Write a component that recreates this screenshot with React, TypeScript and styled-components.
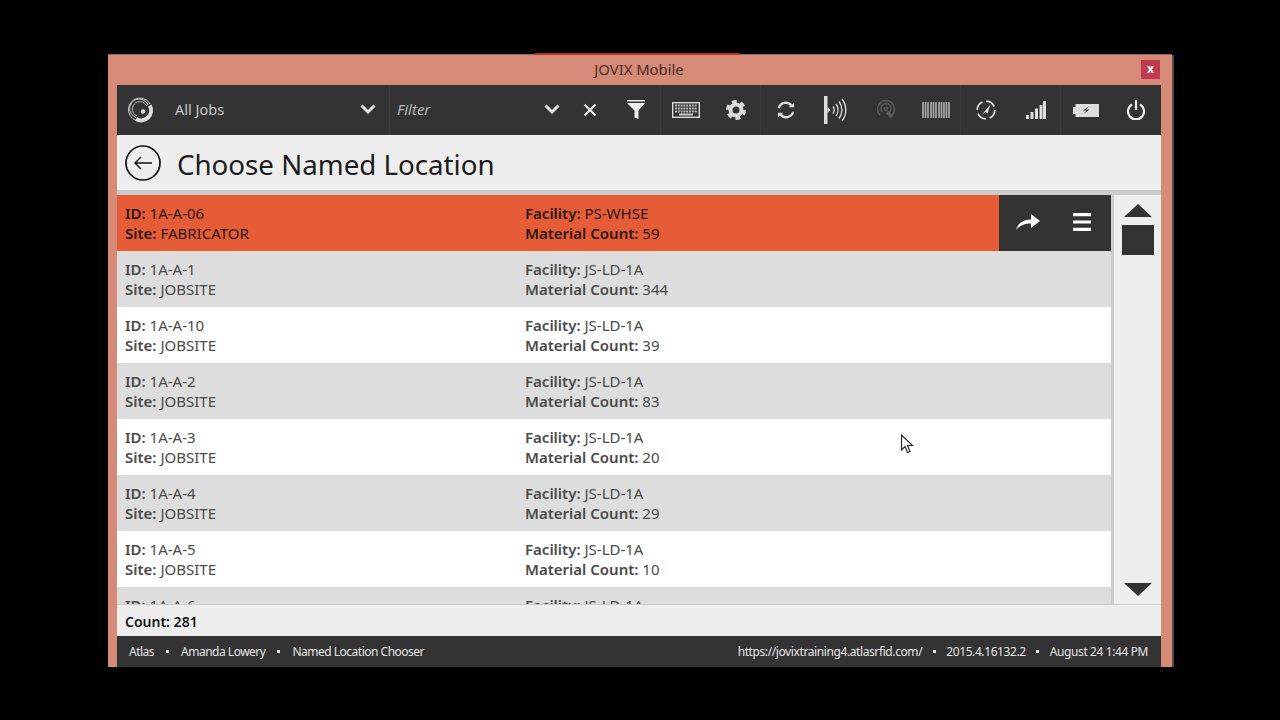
import React from 'react';
import styled, { createGlobalStyle } from 'styled-components';

const Global = createGlobalStyle`
  html, body {
    margin: 0;
    padding: 0;
    width: 1280px;
    height: 720px;
    overflow: hidden;
    background: #000;
    font-family: "Noto Sans", "Open Sans", "Liberation Sans", sans-serif;
  }
  * { box-sizing: border-box; }
`;

const Desk = styled.div`
  position: relative;
  width: 1280px;
  height: 720px;
  padding: 54px 0 0 108px;
`;

const Win = styled.div`
  position: relative;
  width: 1064px;
  height: 613px;
  background: #d58b77;
  border-top: 1px solid #8a6a60;
  padding: 0 11px 1px 9px;
  display: flex;
  flex-direction: column;
`;

const TopGlow = styled.div`
  position: absolute;
  top: -2px;
  left: 427px;
  width: 205px;
  height: 2px;
  background: #b5331a;
`;

const EdgeLine = styled.div`
  position: absolute;
  top: 0;
  right: -2px;
  width: 2px;
  height: 100%;
  background: #54474a;
`;

const TitleBar = styled.div`
  height: 30px;
  flex: none;
  display: flex;
  align-items: center;
  justify-content: center;
  font-size: 14.8px;
  color: #4a2a22;
  padding-bottom: 2px;
`;

const CloseBtn = styled.div`
  position: absolute;
  top: 5px;
  right: 12px;
  width: 19px;
  height: 19px;
  background: #c0394c;
  color: #fff;
  font-size: 12px;
  font-weight: 700;
  line-height: 17px;
  text-align: center;
`;

const Toolbar = styled.div`
  height: 50px;
  flex: none;
  background: #333;
  display: flex;
  align-items: stretch;
`;

const LogoCell = styled.div`
  width: 48px;
  display: flex;
  align-items: center;
  justify-content: center;
`;

const JobSelect = styled.div`
  width: 225px;
  padding: 0 13px 2px 10px;
  display: flex;
  align-items: center;
  justify-content: space-between;
  border-right: 1px solid #3a3a3a;
  color: #c8c8c8;
  font-size: 14.5px;
`;

const FilterBox = styled.div`
  width: 175px;
  padding: 0 5px 3px 7px;
  display: flex;
  align-items: center;
  justify-content: space-between;
  color: #b8b8b8;
  font-size: 15px;
  font-style: italic;
`;

const ClearCell = styled.div`
  width: 46px;
  padding-left: 4px;
  display: flex;
  align-items: center;
  justify-content: center;
`;

const ToolBtn = styled.div<{ $divider?: boolean }>`
  width: 50px;
  display: flex;
  align-items: center;
  justify-content: center;
  border-right: 1px solid ${p => (p.$divider ? '#3a3a3a' : 'transparent')};
`;

const Header = styled.div`
  height: 55px;
  flex: none;
  background: #eee;
  display: flex;
  align-items: center;
  gap: 16px;
  padding: 0 0 0 8px;
`;

const BackBtn = styled.div`
  width: 36px;
  height: 36px;
  display: flex;
`;

const Title = styled.h1`
  margin: 2px 0 0;
  font-size: 27.7px;
  font-weight: 400;
  color: #1c1c1c;
  line-height: 36px;
`;

const Main = styled.div`
  height: 415px;
  flex: none;
  display: flex;
  background: #eee;
  border-top: 5px solid #ccc;
  border-bottom: 1px solid #ccc;
`;

const List = styled.div`
  width: 994px;
  flex: none;
  overflow: hidden;
`;

const Row = styled.div<{ $tone: 'sel' | 'grey' | 'white' }>`
  height: 56px;
  display: flex;
  font-size: 15px;
  line-height: 20px;
  background: ${p => (p.$tone === 'sel' ? '#e55c37' : p.$tone === 'grey' ? '#dcdddc' : '#fff')};
  color: ${p => (p.$tone === 'sel' ? '#2c1810' : '#4a4a4a')};
`;

const Col = styled.div<{ $wide?: boolean }>`
  width: 400px;
  padding: 8px 0 0 8px;
  flex: ${p => (p.$wide ? '1' : 'none')};
  white-space: nowrap;
`;

const Label = styled.b`
  font-weight: 600;
`;

const Actions = styled.div`
  width: 112px;
  flex: none;
  background: #333;
  display: flex;
  align-items: center;
  justify-content: space-around;
  padding: 0 4px 3px 0;
`;

const Scroll = styled.div`
  flex: 1;
  border-left: 3px solid #ccc;
  padding: 9px 0 8px;
  display: flex;
  flex-direction: column;
  align-items: center;
`;

const Arrow = styled.div<{ $down?: boolean }>`
  width: 0;
  height: 0;
  border-left: 14px solid transparent;
  border-right: 14px solid transparent;
  border-${p => (p.$down ? 'top' : 'bottom')}: 13px solid #333;
  ${p => (p.$down ? 'margin-top: auto;' : '')}
`;

const Thumb = styled.div`
  width: 32px;
  height: 30px;
  margin-top: 8px;
  background: #333;
`;

const CountBar = styled.div`
  height: 31px;
  flex: none;
  background: #eee;
  padding: 1px 8px 0;
  display: flex;
  align-items: center;
  font-size: 14px;
  font-weight: 600;
  color: #111;
`;

const StatusBar = styled.div`
  height: 31px;
  flex: none;
  background: #333;
  color: #e6e6e6;
  font-size: 12px;
  display: flex;
  align-items: center;
  justify-content: space-between;
  padding: 0 13px 0 12px;
`;

const StatusGroup = styled.div<{ $tight?: boolean }>`
  display: flex;
  align-items: center;
  letter-spacing: ${p => (p.$tight ? '-0.5px' : '-0.4px')};
`;

const Dot = styled.i<{ $narrow?: boolean }>`
  width: 3px;
  height: 3px;
  margin: 0 ${p => (p.$narrow ? '10.500px' : '12px')};
  background: #e6e6e6;
`;

const Pointer = styled.svg`
  position: absolute;
  left: 900px;
  top: 434px;
`;

const rows = [
  ['1A-A-1', 'JOBSITE', 'JS-LD-1A', '344'],
  ['1A-A-10', 'JOBSITE', 'JS-LD-1A', '39'],
  ['1A-A-2', 'JOBSITE', 'JS-LD-1A', '83'],
  ['1A-A-3', 'JOBSITE', 'JS-LD-1A', '20'],
  ['1A-A-4', 'JOBSITE', 'JS-LD-1A', '29'],
  ['1A-A-5', 'JOBSITE', 'JS-LD-1A', '10'],
  ['1A-A-6', 'JOBSITE', 'JS-LD-1A', '12'],
];

const Chevron = () => (
  <svg width="16" height="12" viewBox="0 0 16 12">
    <path d="M1.500 2.500 8 9l6.500-6.500" fill="none" stroke="#e4e4e4" strokeWidth="3" />
  </svg>
);

function App() {
  return (
    <Desk>
      <Global />
      <Win>
        <TopGlow />
        <EdgeLine />
        <TitleBar>JOVIX Mobile</TitleBar>
        <CloseBtn>x</CloseBtn>
        <Toolbar>
          <LogoCell>
            <svg width="26" height="26" viewBox="0 0 26 26" fill="none">
              <path d="M22 7A11.500 11.500 0 1 0 7 23" stroke="#ccc" strokeWidth="1" />
              <path d="M20 8A9.500 9.500 0 1 0 8 20.500" stroke="#ccc" strokeWidth="1" />
              <path d="M18.500 8.500A7.500 7.500 0 1 0 9 19" stroke="#bbb" strokeWidth="1" />
              <path d="M21.800 8.500A10 10 0 0 1 8 22" stroke="#ddd" strokeWidth="4" />
              <circle cx="15" cy="14.500" r="2.200" fill="#ddd" />
            </svg>
          </LogoCell>
          <JobSelect>
            All Jobs
            <Chevron />
          </JobSelect>
          <FilterBox>
            Filter
            <Chevron />
          </FilterBox>
          <ClearCell>
            <svg width="14" height="14" viewBox="0 0 14 14">
              <path d="M1.500 1.500l11 11M12.500 1.500l-11 11" stroke="#eee" strokeWidth="2.200" />
            </svg>
          </ClearCell>
          <ToolBtn $divider>
            <svg width="18" height="20" viewBox="0 0 18 20">
              <path d="M0 0h18v1.600H0zM0 3h18l-6.500 7.500V19l-4-1.500v-7z" fill="#eee" />
            </svg>
          </ToolBtn>
          <ToolBtn>
            <svg width="28" height="16" viewBox="0 0 28 16">
              <rect x=".7" y=".7" width="26.600" height="14.600" fill="none" stroke="#ddd" strokeWidth="1.400" />
              <path d="M3 3.500h22M3 6.500h22M3 9.500h22" stroke="#bbb" strokeWidth="2" strokeDasharray="2 .8" />
              <path d="M7 12.500h14" stroke="#ccc" strokeWidth="2" />
            </svg>
          </ToolBtn>
          <ToolBtn $divider>
            <svg width="20" height="20" viewBox="0 0 20 20" fill="none" stroke="#ddd">
              <circle cx="10" cy="10" r="5.500" strokeWidth="4" />
              <circle cx="10" cy="10" r="8.500" strokeWidth="3" strokeDasharray="4.900 4" />
            </svg>
          </ToolBtn>
          <ToolBtn>
            <svg width="18" height="18" viewBox="0 0 20 20" fill="none">
              <path d="M2 8a8 8 0 0 1 14-3" stroke="#ddd" strokeWidth="2.600" />
              <path d="M18 12a8 8 0 0 1-14 3" stroke="#ddd" strokeWidth="2.600" />
              <path d="M13 7h6V2zM7 13H1v5z" fill="#ddd" />
            </svg>
          </ToolBtn>
          <ToolBtn>
            <svg width="24" height="28" viewBox="0 0 24 28" fill="none" stroke="#ddd" strokeWidth="1.300">
              <rect x="0" y="0" width="3.500" height="28" fill="#ddd" stroke="none" />
              <path d="M3.500 11l3 3-3 3z" fill="#ddd" stroke="none" />
              <path d="M9 10.500a6 6 0 0 1 0 7M12 8a10 10 0 0 1 0 12M15 5.500a14 14 0 0 1 0 17M18 3a18 18 0 0 1 0 22" />
            </svg>
          </ToolBtn>
          <ToolBtn>
            <svg width="20" height="20" viewBox="0 0 20 20" fill="none" stroke="#5c5c5c" strokeWidth="1.500">
              <path d="M4 15a8.500 8.500 0 1 1 12 0" />
              <path d="M6.500 12a5 5 0 1 1 7 0" />
              <circle cx="10" cy="9" r="1.500" />
              <path d="M11 12l5 5" strokeWidth="3.500" />
            </svg>
          </ToolBtn>
          <ToolBtn $divider>
            <svg width="28" height="16" viewBox="0 0 28 16">
              <path
                d="M1 0v16M3.500 0v16M6 0v16M9 0v16M11.500 0v16M14 0v16M17 0v16M19.500 0v16M22 0v16M24.500 0v16M27 0v16"
                stroke="#a8a8a8"
                strokeWidth="1.700"
              />
            </svg>
          </ToolBtn>
          <ToolBtn>
            <svg width="20" height="20" viewBox="0 0 20 20" fill="none">
              <circle cx="10" cy="10" r="8.800" stroke="#ddd" strokeWidth="1.700" strokeDasharray="10 3.800" />
              <path d="M14.500 4.500 6 14.500l3.700-2.500 1.800 1.500z" fill="#ddd" />
            </svg>
          </ToolBtn>
          <ToolBtn $divider>
            <svg width="20" height="18" viewBox="0 0 20 18">
              <path d="M0 14h3v4H0zM4.500 11h3v7h-3zM9 7.500h3V18H9zM13.500 4h3v14h-3zM17 0h3v18h-3z" fill="#ddd" />
            </svg>
          </ToolBtn>
          <ToolBtn>
            <svg width="26" height="14" viewBox="0 0 26 14">
              <path d="M0 4h2.500V1H26v13H2.500v-3H0z" fill="#ddd" />
              <path d="M16 3l-6 4.500h3.500L10.500 11l6-4.500H13z" fill="#333" />
            </svg>
          </ToolBtn>
          <ToolBtn>
            <svg width="18" height="20" viewBox="0 0 18 20" fill="none" stroke="#eee" strokeWidth="2.200">
              <path d="M5 4.500a8 8 0 1 0 8 0" />
              <path d="M9 0v10" />
            </svg>
          </ToolBtn>
        </Toolbar>
        <Header>
          <BackBtn>
            <svg width="36" height="36" viewBox="0 0 36 36" fill="none" stroke="#111">
              <circle cx="18" cy="18" r="17" strokeWidth="1.700" />
              <path d="M27 18H10M16 12l-6 6 6 6" strokeWidth="1.400" />
            </svg>
          </BackBtn>
          <Title>Choose Named Location</Title>
        </Header>
        <Main>
          <List>
            <Row $tone="sel">
              <Col>
                <div><Label>ID:</Label> 1A-A-06</div>
                <div><Label>Site:</Label> FABRICATOR</div>
              </Col>
              <Col $wide>
                <div><Label>Facility:</Label> PS-WHSE</div>
                <div><Label>Material Count:</Label> 59</div>
              </Col>
              <Actions>
                <svg width="24" height="16" viewBox="0 0 24 16">
                  <path d="M0 16C2 9 7 5.500 15 5.500V0l9 7-9 7V9.500C9 9.500 4 11 0 16z" fill="#fff" />
                </svg>
                <svg width="18" height="18" viewBox="0 0 18 18">
                  <path d="M0 0h18v3.200H0zM0 7.400h18v3.200H0zM0 14.800h18V18H0z" fill="#fff" />
                </svg>
              </Actions>
            </Row>
            {rows.map((r, i) => (
              <Row key={r[0]} $tone={i % 2 === 0 ? 'grey' : 'white'}>
                <Col>
                  <div><Label>ID:</Label> {r[0]}</div>
                  <div><Label>Site:</Label> {r[1]}</div>
                </Col>
                <Col $wide>
                  <div><Label>Facility:</Label> {r[2]}</div>
                  <div><Label>Material Count:</Label> {r[3]}</div>
                </Col>
              </Row>
            ))}
          </List>
          <Scroll>
            <Arrow />
            <Thumb />
            <Arrow $down />
          </Scroll>
        </Main>
        <CountBar>Count: 281</CountBar>
        <StatusBar>
          <StatusGroup $tight>
            Atlas<Dot />Amanda Lowery<Dot />Named Location Chooser
          </StatusGroup>
          <StatusGroup>
            https://jovixtraining4.atlasrfid.com/<Dot $narrow />2015.4.16132.2<Dot $narrow />August 24 1:44 PM
          </StatusGroup>
        </StatusBar>
      </Win>
      <Pointer width="14" height="20" viewBox="0 0 14 20">
        <path d="M1.500 1v15l3.500-3.500 2.500 6 2.500-1-2.500-6h5z" fill="#fff" stroke="#222" strokeWidth="1.100" />
      </Pointer>
    </Desk>
  );
}

export default App;
